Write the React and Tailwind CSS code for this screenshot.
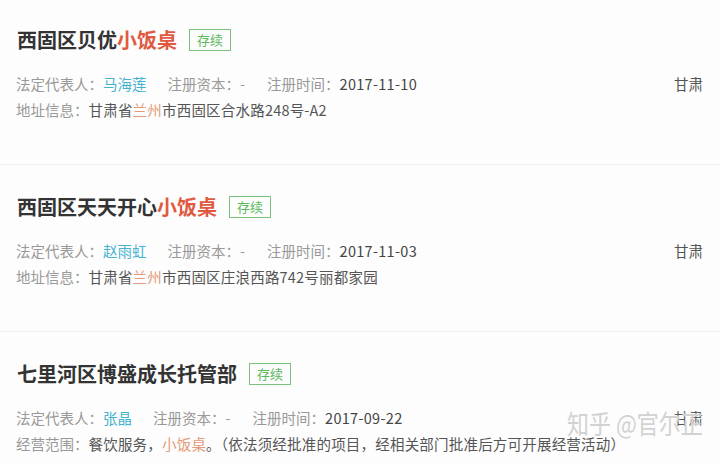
const items = [
  {
    name: "西固区贝优",
    hl: "小饭桌",
    person: "马海莲",
    date: "2017-11-10",
    first: true,
    lineLabel: "地址信息：",
    line: (
      <>
        甘肃省<span className="text-[#e39a7a]">兰州</span>市西固区合水路248号-A2
      </>
    ),
  },
  {
    name: "西固区天天开心",
    hl: "小饭桌",
    person: "赵雨虹",
    date: "2017-11-03",
    lineLabel: "地址信息：",
    line: (
      <>
        甘肃省<span className="text-[#e39a7a]">兰州</span>市西固区庄浪西路742号丽都家园
      </>
    ),
  },
  {
    name: "七里河区博盛成长托管部",
    hl: "",
    person: "张晶",
    date: "2017-09-22",
    lineLabel: "经营范围：",
    line: (
      <>
        餐饮服务，<span className="text-[#e39a7a]">小饭桌</span>。（依法须经批准的项目，经相关部门批准后方可开展经营活动）
      </>
    ),
  },
];

function Item({ item }) {
  return (
    <div
      className={`border-b border-[#eeeeee] pl-[16px] pr-[17px] pb-[41px] ${
        item.first ? "pt-[26px]" : "pt-[28px]"
      }`}
    >
      <div className="flex items-center h-[28px] pl-[1px]">
        <span className="text-[20px] font-bold text-[#333333] leading-[28px]">
          {item.name}
          <span className="text-[#e05a42]">{item.hl}</span>
        </span>
        <span className="ml-3 h-[22px] px-[7px] border border-[#7cc47c] text-[#5cb85c] text-[13px] leading-[20px]">
          存续
        </span>
      </div>
      <div className="mt-[17px] flex items-center h-[26px] text-[14.5px] leading-[26px]">
        <span className="text-[#999999]">法定代表人：</span>
        <span className="text-[#45b3cf]">{item.person}</span>
        <span className="ml-[21px] text-[#999999]">注册资本：-</span>
        <span className="ml-[22px] text-[#999999]">注册时间：</span>
        <span className="text-[#444444] tracking-[0.3px]">{item.date}</span>
        <span className="ml-auto text-[#555555]">甘肃</span>
      </div>
      <div className="h-[26px] text-[14.5px] leading-[26px] whitespace-nowrap">
        <span className="text-[#999999]">{item.lineLabel}</span>
        <span className="text-[#555555] tracking-[0.2px]">{item.line}</span>
      </div>
    </div>
  );
}

export default function App() {
  return (
    <div
      className="relative w-[720px] h-[464px] overflow-hidden bg-[#fdfdfd]"
      style={{ fontFamily: '"Noto Sans CJK SC", "Noto Sans", sans-serif' }}
    >
      {items.map((item, i) => (
        <Item key={i} item={item} />
      ))}
      <div className="absolute left-[567px] top-[400px] text-[22px] leading-[36px] text-[#d2d2d2] whitespace-nowrap origin-top-left scale-y-[1.2] [text-shadow:0_0_2px_rgba(255,255,255,0.9)]">
        知乎 @官尔正
      </div>
    </div>
  );
}
